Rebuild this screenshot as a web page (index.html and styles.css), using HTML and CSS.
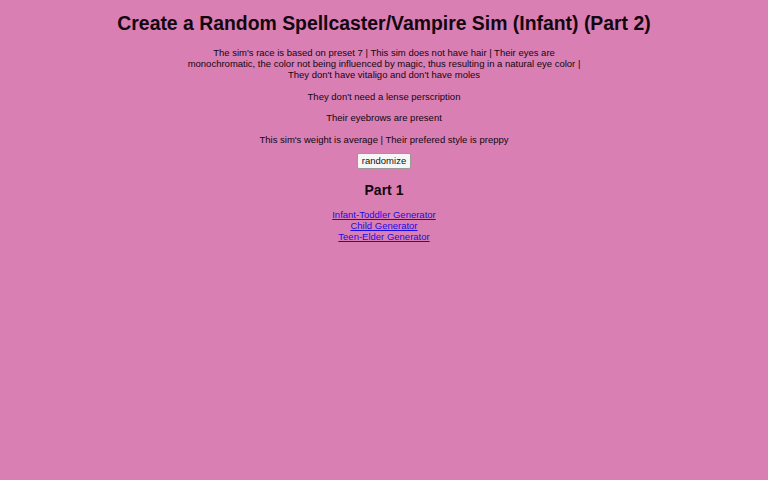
FILE: index.html
```html
<!DOCTYPE html>
<html lang="en">
<head>
    <meta charset="UTF-8">
    <title>Random Spellcaster/Vampire Sim (Infant) (Part 2)</title>
    <link rel="stylesheet" href="styles.css">
</head>
<body>

    <h1 class="title">Create a Random Spellcaster/Vampire Sim (Infant) (Part 2)</h1>

    <p class="trait" id="body-traits">The sim's race is based on preset 7 | This sim does not have hair | Their eyes are<br>monochromatic, the color not being influenced by magic, thus resulting in a natural eye color |<br>They don't have vitaligo and don't have moles</p>
    <p class="trait" id="lense">They don't need a lense perscription</p>
    <p class="trait" id="brows">Their eyebrows are present</p>
    <p class="trait" id="style">This sim's weight is average | Their prefered style is preppy</p>

    <div class="actions">
        <button class="btn" id="randomize">randomize</button>
    </div>

    <h3 class="part">Part 1</h3>

    <div class="links">
        <a href="#">Infant-Toddler Generator</a><br>
        <a href="#">Child Generator</a><br>
        <a href="#">Teen-Elder Generator</a>
    </div>

</body>
</html>
```

FILE: styles.css
```css
body {
    background-color: #da7fb3;
    color: #14060f;
    font-family: 'Liberation Sans', Arial, sans-serif;
    font-size: 9.5px;
    text-align: center;
    margin: 8px;
}

.title {
    font-size: 19.4px;
    font-weight: bold;
    margin: 4px 0 12px;
}

.trait {
    font-size: 9.5px;
    line-height: 11px;
    margin: 0 0 10.5px;
}

.actions {
    margin-top: -2px;
    line-height: 16px;
}

.btn {
    font-family: 'Liberation Sans', Arial, sans-serif;
    font-size: 9.5px;
    color: #111;
    background: #f6f6f6;
    border: 1px solid #999;
    border-radius: 2px;
    padding: 2px 4px;
    height: 16px;
    line-height: 10px;
    vertical-align: top;
}

.part {
    font-size: 14px;
    font-weight: bold;
    margin: 13px 0 11px;
}

.links {
    font-size: 9.5px;
    line-height: 11px;
}

.links a {
    color: #1b0ae6;
}
```
